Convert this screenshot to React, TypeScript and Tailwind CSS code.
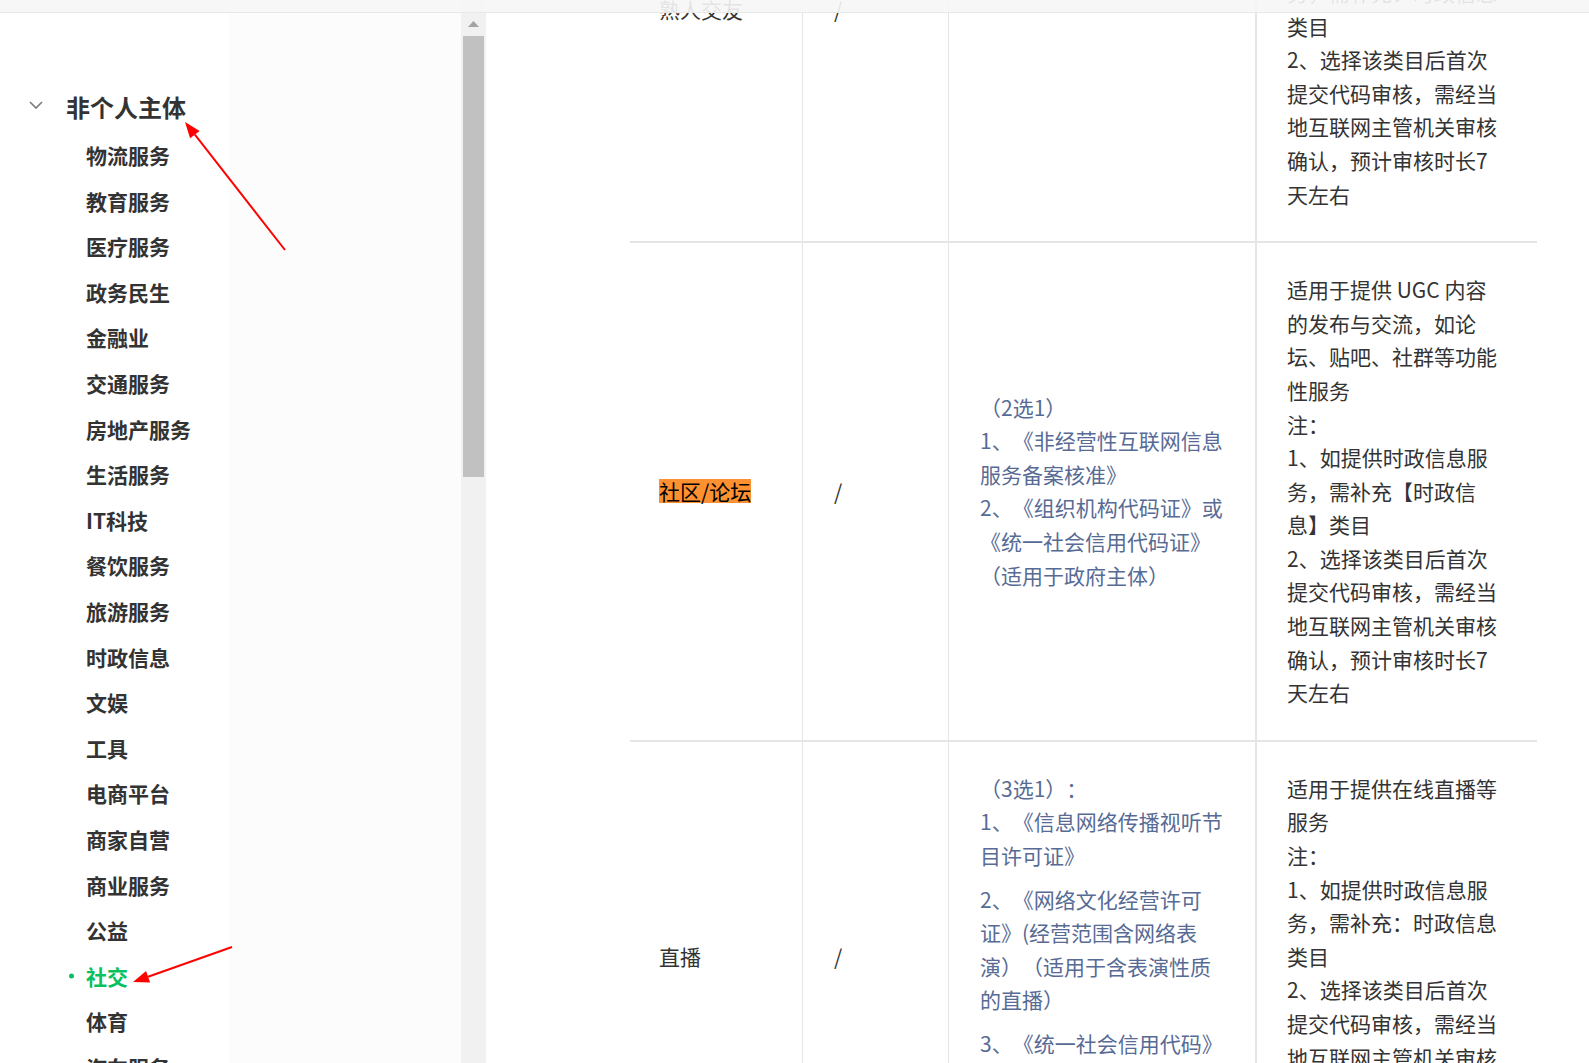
import React from "react";

const items = [
  "物流服务",
  "教育服务",
  "医疗服务",
  "政务民生",
  "金融业",
  "交通服务",
  "房地产服务",
  "生活服务",
  "IT科技",
  "餐饮服务",
  "旅游服务",
  "时政信息",
  "文娱",
  "工具",
  "电商平台",
  "商家自营",
  "商业服务",
  "公益",
  "社交",
  "体育",
  "汽车服务",
  "其他",
];

function Lines({ lines }: { lines: string[] }) {
  return (
    <>
      {lines.map((l, i) => (
        <div key={i}>{l}</div>
      ))}
    </>
  );
}

const c1 =
  "w-[173px] shrink-0 border-r border-[#e5e5e5] pl-[29px] pr-[10px] py-[30px] flex items-center";
const c2 =
  "w-[146px] shrink-0 border-r border-[#e5e5e5] pl-[31px] pr-[10px] py-[30px] flex items-center";
const c3 =
  "w-[308px] shrink-0 border-r-2 border-[#e5e5e5] pl-[31px] pr-[26px] py-[30px] flex flex-col justify-center text-[#576b95]";
const c3top =
  "w-[308px] shrink-0 border-r-2 border-[#e5e5e5] pl-[31px] pr-[26px] py-[30px] flex flex-col justify-start text-[#576b95]";
const c4 =
  "w-[280px] shrink-0 pl-[30px] pr-[36px] py-[30px] flex flex-col justify-center";

export default function App() {
  return (
    <div
      lang="zh-CN"
      className="relative h-[1063px] w-[1589px] overflow-hidden bg-white text-[#333] [font-family:'Noto_Sans_CJK_SC','Noto_Sans',sans-serif] [text-spacing-trim:space-all]"
    >
      <div className="flex h-full">
        {/* Sidebar */}
        <aside className="flex h-full w-[461px] shrink-0 bg-[#fcfcfc]">
          <div className="h-full w-[230px] bg-white">
            <nav className="pt-[91px]">
              <div className="flex h-[32px] items-start">
                <svg
                  className="ml-[29px] mt-[10px] h-[8px] w-[14px] shrink-0"
                  viewBox="0 0 14 8"
                >
                  <path
                    d="M1 1 L7 7 L13 1"
                    fill="none"
                    stroke="#7d7d7d"
                    strokeWidth="1.7"
                  />
                </svg>
                <span className="ml-[23px] whitespace-nowrap text-[24px] font-bold leading-[32px] text-[#333]">
                  非个人主体
                </span>
              </div>
              <ul className="mt-[10px]">
                {items.map((it) => {
                  const active = it === "社交";
                  return (
                    <li
                      key={it}
                      className={
                        active
                          ? "relative flex h-[45.6px] items-center whitespace-nowrap pl-[86px] text-[21px] font-bold text-[#07c160]"
                          : "relative flex h-[45.6px] items-center whitespace-nowrap pl-[86px] text-[21px] font-bold text-[#333]"
                      }
                    >
                      {active && (
                        <span className="absolute left-[69px] top-1/2 h-[5px] w-[5px] -translate-y-1/2 rounded-full bg-[#07c160]" />
                      )}
                      {it}
                    </li>
                  );
                })}
              </ul>
            </nav>
          </div>
        </aside>

        {/* Scrollbar */}
        <div className="flex h-full w-[25px] shrink-0 flex-col bg-[#f1f1f1]">
          <div className="h-[12px]" />
          <div className="flex h-[24px] items-center justify-center">
            <svg width="11" height="6" viewBox="0 0 11 6">
              <path d="M5.5 0 L11 6 L0 6 Z" fill="#a3a3a3" />
            </svg>
          </div>
          <div className="mx-[2px] h-[441px] bg-[#c1c1c1]" />
        </div>

        {/* Main content */}
        <main className="h-full flex-1 overflow-hidden bg-white">
          <div className="ml-[144px] mt-[-222px] w-[907px] text-[21px] leading-[33.6px]">
            {/* Row 1 */}
            <div className="flex border-b-2 border-[#e5e5e5]">
              <div className={c1}>熟人交友</div>
              <div className={c2}>/</div>
              <div className={c3}></div>
              <div className={c4}>
                <Lines
                  lines={[
                    "适用于提供熟人之间的社交、通讯等功能性服务",
                    "注：",
                    "1、如提供时政信息服务，需补充：时政信息类目",
                    "2、选择该类目后首次提交代码审核，需经当地互联网主管机关审核确认，预计审核时长7天左右",
                  ]}
                />
              </div>
            </div>

            {/* Row 2 */}
            <div className="flex border-b-2 border-[#e5e5e5]">
              <div className={c1}>
                <span className="inline-block bg-[#fd9131] leading-[24px] text-black">
                  社区/论坛
                </span>
              </div>
              <div className={c2}>/</div>
              <div className={c3}>
                <Lines
                  lines={[
                    "（2选1）",
                    "1、《非经营性互联网信息服务备案核准》",
                    "2、《组织机构代码证》或《统一社会信用代码证》（适用于政府主体）",
                  ]}
                />
              </div>
              <div className={c4}>
                <Lines
                  lines={[
                    "适用于提供 UGC 内容的发布与交流，如论坛、贴吧、社群等功能性服务",
                    "注：",
                    "1、如提供时政信息服务，需补充【时政信息】类目",
                    "2、选择该类目后首次提交代码审核，需经当地互联网主管机关审核确认，预计审核时长7天左右",
                  ]}
                />
              </div>
            </div>

            {/* Row 3 */}
            <div className="flex border-b-2 border-[#e5e5e5]">
              <div className={c1}>直播</div>
              <div className={c2}>/</div>
              <div className={c3top}>
                <div>
                  <div>（3选1）：</div>
                  <div>1、《信息网络传播视听节目许可证》</div>
                </div>
                <div className="mt-[10px]">
                  2、《网络文化经营许可证》(经营范围含网络表演）（适用于含表演性质的直播）
                </div>
                <div className="mt-[10px]">
                  3、《统一社会信用代码》（适用于政府主体）
                </div>
              </div>
              <div className={c4}>
                <Lines
                  lines={[
                    "适用于提供在线直播等服务",
                    "注：",
                    "1、如提供时政信息服务，需补充：时政信息类目",
                    "2、选择该类目后首次提交代码审核，需经当地互联网主管机关审核确认，预计审核时长7天左右",
                  ]}
                />
              </div>
            </div>
          </div>
        </main>
      </div>

      {/* Top bar overlay */}
      <div className="absolute left-0 right-0 top-0 h-[13px] border-b border-[#e8e8e8] bg-[#f6f6f6]/90" />

      {/* Red annotation arrows */}
      <svg
        className="pointer-events-none absolute left-0 top-0"
        width="1589"
        height="1063"
        viewBox="0 0 1589 1063"
      >
        <line x1="285" y1="250" x2="194.9" y2="134.6" stroke="#ff0000" strokeWidth="2" />
        <polygon points="185,122 199.6,130.9 190.1,138.3" fill="#ff0000" />
        <line x1="232" y1="947" x2="148.1" y2="976.7" stroke="#ff0000" strokeWidth="2" />
        <polygon points="133,982 146.1,971.0 150.1,982.4" fill="#ff0000" />
      </svg>
    </div>
  );
}
